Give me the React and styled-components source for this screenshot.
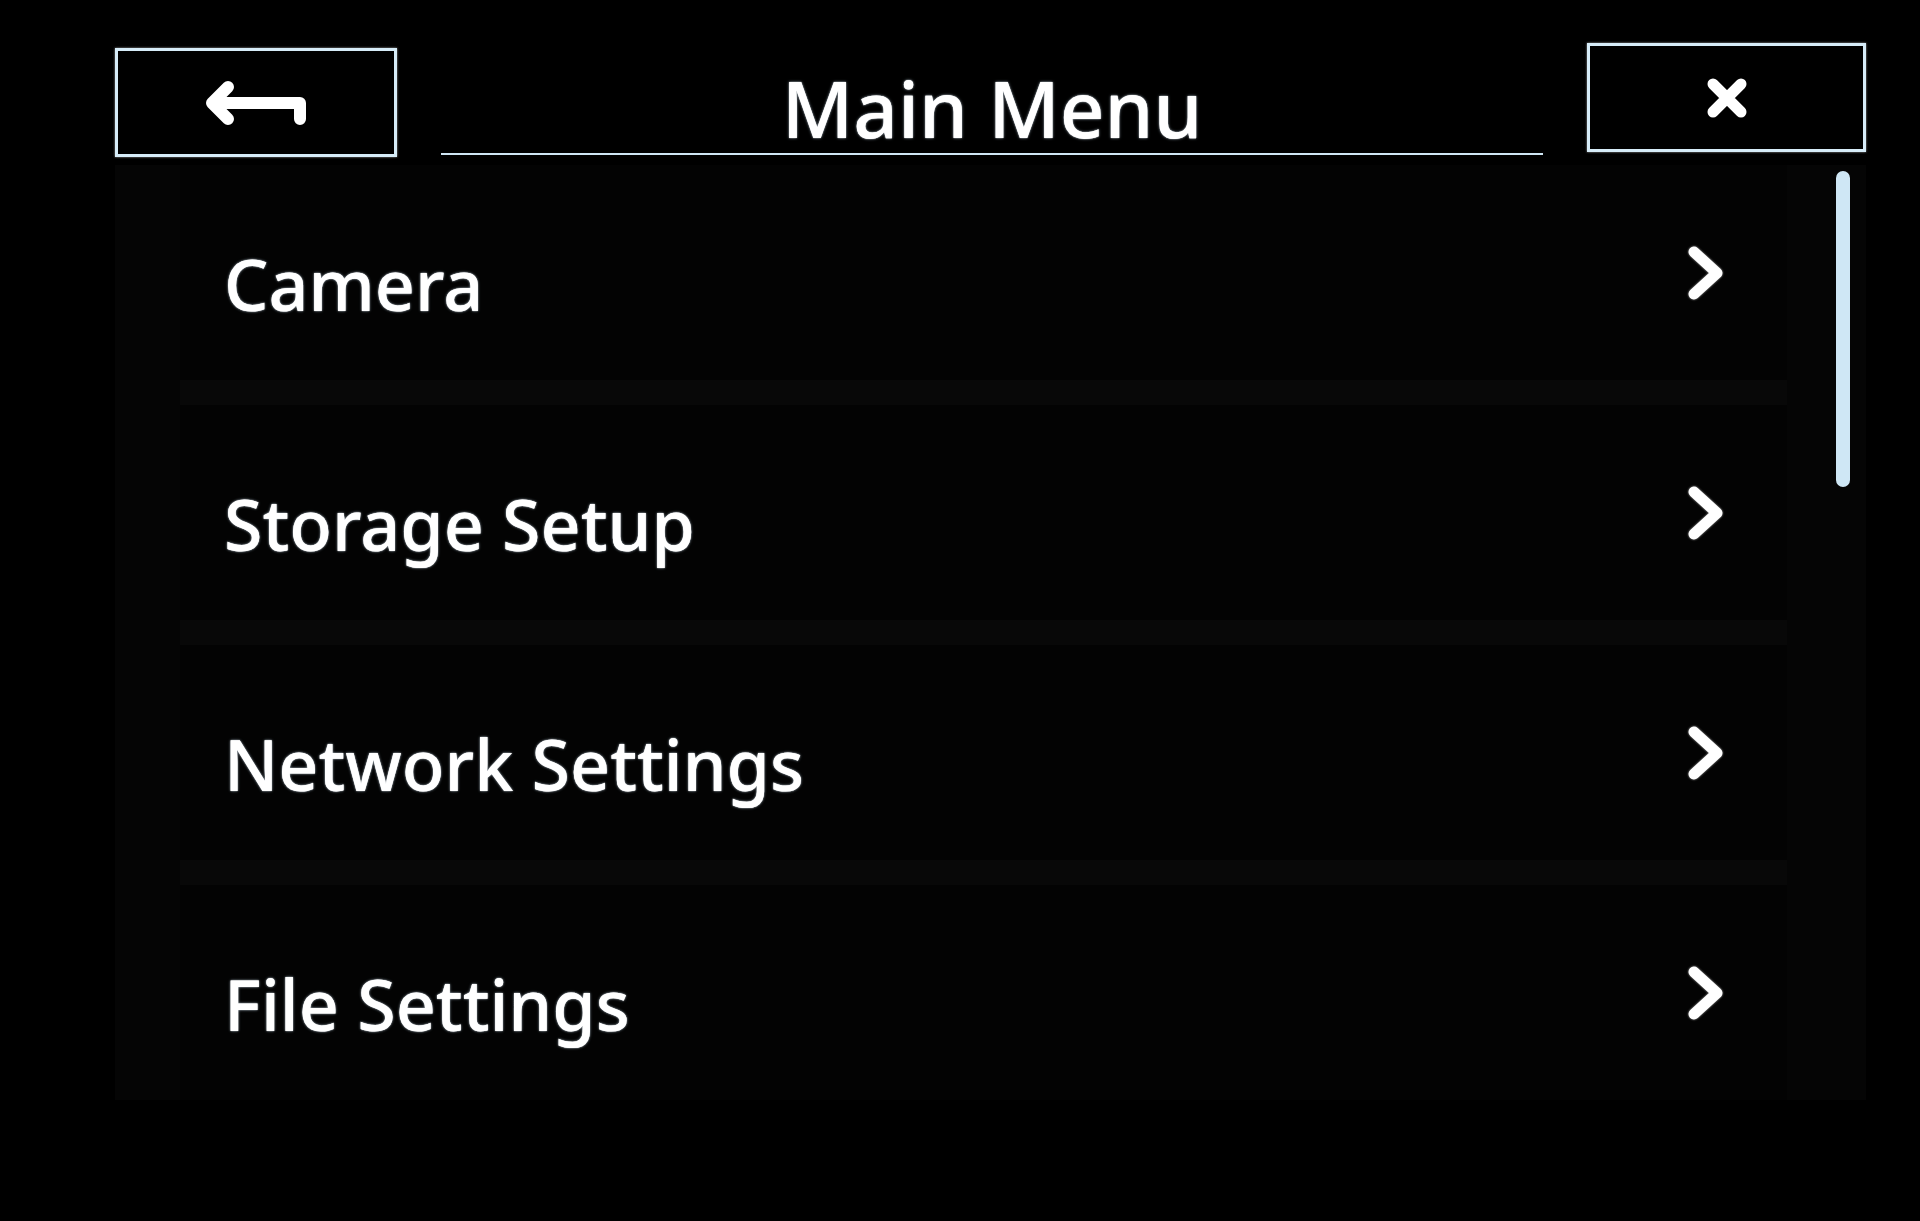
import styled, { createGlobalStyle } from "styled-components";

const GlobalStyle = createGlobalStyle`
  html, body {
    margin: 0;
    padding: 0;
    background: #000;
  }
  body {
    font-family: "Noto Sans", "Open Sans", sans-serif;
    color: #fff;
  }
`;

const items = ["Camera", "Storage Setup", "Network Settings", "File Settings"];

const BackIcon = () => (
  <svg width="100" height="44" viewBox="0 0 100 44" fill="none">
    <path
      d="M22 6 L6 22 L22 38 M6 22 H94 V38"
      stroke="#fff"
      strokeWidth="12"
      strokeLinecap="round"
      strokeLinejoin="round"
    />
  </svg>
);

const CloseIcon = () => (
  <svg width="42" height="42" viewBox="0 0 42 42" fill="none">
    <path
      d="M7 7 L35 35 M35 7 L7 35"
      stroke="#fff"
      strokeWidth="11"
      strokeLinecap="round"
    />
  </svg>
);

const Chevron = () => (
  <svg width="38" height="56" viewBox="0 0 38 56" fill="none">
    <path
      d="M7 7 L30 28 L7 49"
      stroke="#fff"
      strokeWidth="11"
      strokeLinecap="round"
      strokeLinejoin="round"
    />
  </svg>
);

const App = () => {
  return (
    <Screen>
      <GlobalStyle />
      <Header>
        <FrameButton $offset={5} $width={282}>
          <BackIcon />
        </FrameButton>
        <Title>Main Menu</Title>
        <FrameButton $offset={0} $width={279}>
          <CloseIcon />
        </FrameButton>
      </Header>
      <Panel>
        <List>
          {items.map((label) => (
            <Row key={label}>
              <Label>{label}</Label>
              <Chevron />
            </Row>
          ))}
        </List>
        <ScrollTrack>
          <Thumb />
        </ScrollTrack>
      </Panel>
    </Screen>
  );
};

const Screen = styled.div`
  width: 1920px;
  height: 1221px;
  background: #000;
  padding: 43px 0 0 115px;
  box-sizing: border-box;
  overflow: hidden;
`;

const Header = styled.div`
  display: flex;
  align-items: flex-start;
  gap: 44px;
  width: 1751px;
`;

const FrameButton = styled.div`
  flex: 0 0 auto;
  width: ${(p) => p.$width}px;
  height: 109px;
  margin-top: ${(p) => p.$offset}px;
  box-sizing: border-box;
  border: 3px solid #d6ecf8;
  display: flex;
  align-items: center;
  justify-content: center;
  background: #000;
  filter: drop-shadow(0 0 1px rgba(255, 255, 255, 0.6));
`;

const Title = styled.div`
  flex: 1;
  padding: 26px 0 6px;
  font-size: 78px;
  font-weight: 500;
  line-height: 78px;
  text-align: center;
  border-bottom: 2px solid #cfe6f4;
  text-shadow: 0 0 1px #fff, 0 0 3px rgba(210, 235, 255, 0.6);
`;

const Panel = styled.div`
  margin-top: 8px;
  width: 1751px;
  height: 935px;
  box-sizing: border-box;
  padding: 0 16px 0 65px;
  background: #050505;
  display: grid;
  grid-template-columns: 1607px 14px;
  column-gap: 49px;
`;

const List = styled.div`
  display: flex;
  flex-direction: column;
  gap: 25px;
  background: #080808;
`;

const Row = styled.div`
  height: 215px;
  display: flex;
  align-items: center;
  justify-content: space-between;
  padding: 0 62px 0 44px;
  background: #030303;
  svg {
    filter: drop-shadow(0 0 1px rgba(255, 255, 255, 0.6));
  }
`;

const Label = styled.div`
  padding-top: 23px;
  font-size: 70px;
  font-weight: 500;
  line-height: 70px;
  text-shadow: 0 0 1px #fff, 0 0 3px rgba(210, 235, 255, 0.6);
`;

const ScrollTrack = styled.div`
  padding-top: 6px;
`;

const Thumb = styled.div`
  width: 14px;
  height: 316px;
  border-radius: 7px;
  background: #cfe7f5;
`;

export default App;
